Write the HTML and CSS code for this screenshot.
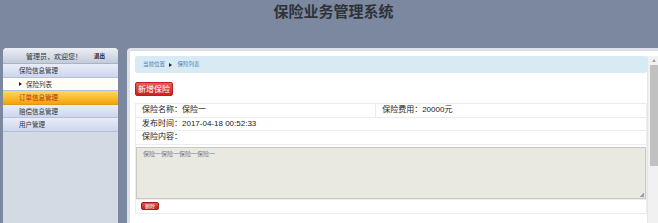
FILE: index.html
```html
<!DOCTYPE html>
<html>
<head>
  <meta charset="utf-8">
  <link rel="stylesheet" href="styles.css">
</head>
<body>
  <div class="top">
    <h1 class="title">保险业务管理系统</h1>
  </div>
  <div class="layout">
    <aside class="side">
      <div class="side-head">
        <span>管理员，欢迎您！</span>
        <a class="logout">退出</a>
      </div>
      <ul class="menu">
        <li class="menu-item">保险信息管理</li>
        <li class="menu-sub"><span class="tri"></span>保险列表</li>
        <li class="menu-item active">订单信息管理</li>
        <li class="menu-item">赔偿信息管理</li>
        <li class="menu-item">用户管理</li>
      </ul>
    </aside>
    <main class="panel">
      <div class="frame">
        <div class="content">
          <div class="crumb">当前位置 <span class="tri dark"></span> 保险列表</div>
          <button class="btn-add">新增保险</button>
          <table class="detail">
            <tr>
              <td class="half">保险名称：保险一</td>
              <td>保险费用：20000元</td>
            </tr>
            <tr><td colspan="2">发布时间：2017-04-18 00:52:33</td></tr>
            <tr><td colspan="2">保险内容：</td></tr>
            <tr>
              <td colspan="2" class="area-cell">
                <div class="area">保险一保险一保险一保险一<span class="grip"></span></div>
              </td>
            </tr>
            <tr><td colspan="2" class="ops"><button class="btn-del">删除</button></td></tr>
          </table>
        </div>
        <div class="scrollbar">
          <div class="arrow"></div>
          <div class="thumb"></div>
        </div>
      </div>
    </main>
  </div>
</body>
</html>
```

FILE: styles.css
```css
/* Base Layout */
html, body {
  height: 100%;
}

body {
  margin: 0;
  overflow: hidden;
  background: #7b889f;
  font-family: "Noto Sans CJK SC", sans-serif;
  color: #333;
}

.top {
  height: 48px;
}

.title {
  margin: 0;
  padding: 1px 0 0 9px;
  text-align: center;
  font-size: 15px;
  line-height: 20px;
  font-weight: bold;
  color: #2f3338;
}

.layout {
  display: flex;
  height: calc(100vh - 48px);
}

/* Sidebar */
.side {
  width: 115px;
  margin-left: 3px;
  background: #d4dae3;
  border-radius: 4px 4px 0 0;
  overflow: hidden;
}

.side-head {
  height: 15px;
  display: flex;
  align-items: center;
  padding-left: 23px;
  background: linear-gradient(#eceff5, #c3cad9);
  border-bottom: 1px solid #a9b3c6;
  font-size: 7px;
  color: #333;
}

.logout {
  margin-left: 12px;
  font-size: 5.5px;
  font-weight: bold;
  color: #222;
}

.menu {
  margin: 0;
  padding: 0;
  list-style: none;
}

.menu-item,
.menu-sub {
  height: 12.5px;
  line-height: 12.5px;
  font-size: 6.5px;
  border-bottom: 1px solid #b4bfdc;
}

.menu-item {
  padding-left: 16px;
  background: linear-gradient(#e9edf9, #cdd6ee);
  color: #333;
}

.menu-item.active {
  background: linear-gradient(#ffd957, #f4a20c);
  border-bottom-color: #e09a1c;
  color: #b2300f;
}

.menu-sub {
  display: flex;
  align-items: center;
  padding-left: 16px;
  background: #fffdf6;
  color: #333;
}

.tri {
  display: inline-block;
  width: 0;
  height: 0;
  margin-right: 4px;
  border-left: 3px solid #222;
  border-top: 2px solid transparent;
  border-bottom: 2px solid transparent;
}

.tri.dark {
  margin: 0 4px 0 3px;
  vertical-align: middle;
}

/* Main panel */
.panel {
  flex: 1;
  margin-left: 9px;
  border-left: 3px solid #dce1e9;
  border-top: 3px solid #dce1e9;
  border-radius: 4px 0 0 0;
  background: #fff;
  overflow: hidden;
}

.frame {
  display: flex;
  height: 100%;
}

.content {
  flex: 1;
  padding: 5px 0 0 5px;
}

.crumb {
  height: 17px;
  line-height: 17px;
  padding-left: 8px;
  background: #d8ebf4;
  border-radius: 2px;
  font-size: 5.5px;
  color: #4a82b8;
}

.btn-add {
  display: block;
  margin-top: 9px;
  height: 14px;
  padding: 0 2px;
  border: 1px solid #b82222;
  border-radius: 2px;
  background: linear-gradient(#ef5a55, #c9221f);
  color: #fff;
  font-family: "Noto Sans CJK SC", sans-serif;
  font-size: 8px;
  line-height: 12px;
}

.detail {
  width: 100%;
  margin-top: 7px;
  border-collapse: collapse;
  font-family: "Liberation Sans", "Noto Sans CJK SC", sans-serif;
  font-size: 8px;
  color: #222;
}

.detail td {
  height: 12.5px;
  padding: 0 0 0 6px;
  border: 1px solid #ececec;
  line-height: 12px;
}

.detail td.half {
  width: 47%;
}

.detail td.area-cell {
  padding: 2px 0 0 0;
}

.area {
  position: relative;
  height: 46px;
  padding: 2px 6px;
  background: #e9e8e1;
  border: 1px solid #c9c9c4;
  font-family: "Noto Sans CJK SC", sans-serif;
  font-size: 6px;
  line-height: 8px;
  color: #7a7a7a;
}

.grip {
  position: absolute;
  right: 1px;
  bottom: 1px;
  width: 4px;
  height: 4px;
  background: linear-gradient(135deg, transparent 50%, #a0a0a0 50%);
}

.detail td.ops {
  height: 13px;
  padding-left: 5px;
}

.btn-del {
  display: block;
  height: 8px;
  width: 18px;
  padding: 0;
  border: 1px solid #a91b1b;
  border-radius: 2px;
  background: linear-gradient(#e9504c, #c52320);
  color: #fff;
  font-family: "Noto Sans CJK SC", sans-serif;
  font-size: 5px;
  line-height: 6px;
}

/* Fake scrollbar */
.scrollbar {
  width: 10px;
  margin-top: 5px;
  background: #f1f1f1;
  border-left: 1px solid #e6e6e6;
}

.arrow {
  width: 0;
  height: 0;
  margin: 3px 0 0 4px;
  border-bottom: 3px solid #a3a3a3;
  border-left: 2px solid transparent;
  border-right: 2px solid transparent;
}

.thumb {
  height: 101px;
  margin: 3px 0 0 2px;
  background: #c1c1c1;
}
```
